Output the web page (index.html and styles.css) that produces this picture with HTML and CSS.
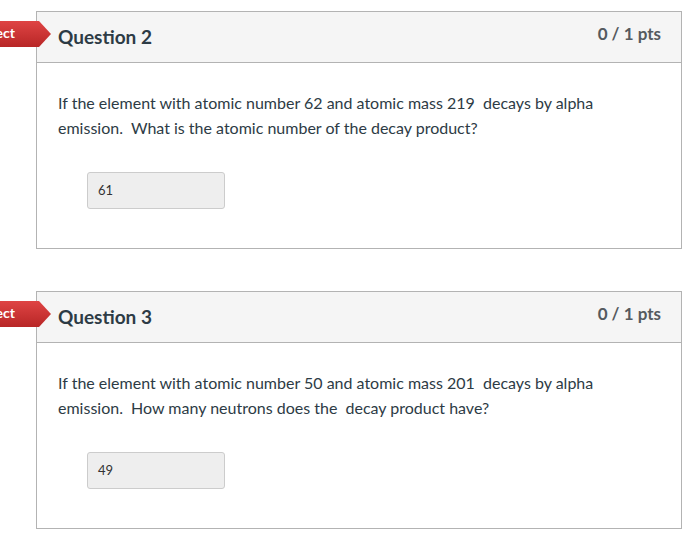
FILE: index.html
```html
<!DOCTYPE html>
<html>
<head>
<meta charset="utf-8">
<link rel="stylesheet" href="styles.css">
</head>
<body>
<div class="page">
  <div class="card">
    <div class="flag">Incorrect</div>
    <div class="card-header">
      <span class="title">Question 2</span>
      <span class="pts">0 / 1 pts</span>
    </div>
    <div class="card-body">
      <p class="text">If the element with atomic number 62 and atomic mass 219&nbsp; decays by alpha emission.&nbsp; What is the atomic number of the decay product?</p>
      <div class="answer">61</div>
    </div>
  </div>
  <div class="card">
    <div class="flag">Incorrect</div>
    <div class="card-header">
      <span class="title">Question 3</span>
      <span class="pts">0 / 1 pts</span>
    </div>
    <div class="card-body">
      <p class="text">If the element with atomic number 50 and atomic mass 201&nbsp; decays by alpha emission.&nbsp; How many neutrons does the&nbsp; decay product have?</p>
      <div class="answer">49</div>
    </div>
  </div>
</div>
</body>
</html>
```
FILE: styles.css
```css
html, body {
  margin: 0;
  padding: 0;
  background: #fff;
  overflow: hidden;
}
body {
  font-family: Lato, "Open Sans", "Liberation Sans", sans-serif;
  color: #2d3b45;
}
.page {
  padding: 11px 0 0 36px;
  display: flex;
  flex-direction: column;
  gap: 42px;
}
.card {
  position: relative;
  width: 644px;
  border: 1px solid #b3b3b3;
}
.card-header {
  height: 50px;
  background: #f5f5f5;
  border-bottom: 1px solid #b3b3b3;
  display: flex;
  align-items: center;
  justify-content: space-between;
  padding: 0 20px 0 21px;
}
.title {
  font-weight: 700;
  font-size: 19px;
  color: #2d3b45;
  margin-top: -2px;
}
.pts {
  font-weight: 700;
  font-size: 17px;
  color: #555a5f;
  margin-top: -7px;
}
.card-body {
  padding: 27px 21px 39px 21px;
}
.text {
  margin: 0;
  width: 580px;
  font-size: 16px;
  line-height: 25px;
}
.answer {
  margin: 32px 0 0 29px;
  width: 126px;
  height: 35px;
  box-sizing: content-box;
  background: #eeeeee;
  border: 1px solid #cccccc;
  border-radius: 3px;
  padding: 0 0 0 10px;
  font-size: 13px;
  line-height: 35px;
  color: #333;
}
.flag {
  position: absolute;
  top: 9px;
  left: -116px;
  width: 130px;
  height: 26px;
  box-sizing: border-box;
  padding-right: 36px;
  text-align: right;
  background: linear-gradient(#df4444, #b82626);
  clip-path: polygon(0 0, calc(100% - 12px) 0, 100% 50%, calc(100% - 12px) 100%, 0 100%);
  color: #fff;
  font-weight: 700;
  font-size: 14px;
  line-height: 24px;
}
```
